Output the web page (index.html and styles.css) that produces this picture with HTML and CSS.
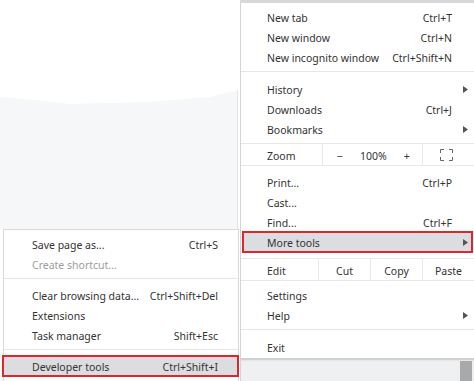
FILE: index.html
```html
<!DOCTYPE html>
<html lang="en">
<head>
  <meta charset="UTF-8">
  <title>Chrome menu - More tools</title>
  <link rel="stylesheet" href="styles.css">
</head>
<body>
  <div class="screen">
    <!-- left side: page behind the menu + submenu -->
    <div class="left">
      <div class="blank"></div>
      <div class="shade"></div>
      <div class="submenu">
        <div class="item"><span class="label">Save page as...</span><span class="key">Ctrl+S</span></div>
        <div class="item disabled"><span class="label">Create shortcut...</span></div>
        <div class="sep"></div>
        <div class="item"><span class="label">Clear browsing data...</span><span class="key">Ctrl+Shift+Del</span></div>
        <div class="item"><span class="label">Extensions</span></div>
        <div class="item"><span class="label">Task manager</span><span class="key">Shift+Esc</span></div>
        <div class="sep"></div>
        <div class="item active dev"><span class="label">Developer tools</span><span class="key">Ctrl+Shift+I</span></div>
      </div>
    </div>

    <!-- right side: main chrome menu -->
    <div class="right">
      <div class="strip"></div>
      <div class="menu">
        <div class="item"><span class="label">New tab</span><span class="key">Ctrl+T</span><span class="more"></span></div>
        <div class="item"><span class="label">New window</span><span class="key">Ctrl+N</span><span class="more"></span></div>
        <div class="item"><span class="label">New incognito window</span><span class="key">Ctrl+Shift+N</span><span class="more"></span></div>
        <div class="sep"></div>
        <div class="item"><span class="label">History</span><span class="more"><svg width="5" height="7" viewBox="0 0 5 7"><path d="M0 0 L5 3.5 L0 7 Z" fill="#555"/></svg></span></div>
        <div class="item"><span class="label">Downloads</span><span class="key">Ctrl+J</span><span class="more"></span></div>
        <div class="item"><span class="label">Bookmarks</span><span class="more"><svg width="5" height="7" viewBox="0 0 5 7"><path d="M0 0 L5 3.5 L0 7 Z" fill="#555"/></svg></span></div>

        <div class="zoom-row">
          <div class="cell zoom-label">Zoom</div>
          <div class="cell zoom-ctrl"><span class="minus">−</span><span class="pct">100%</span><span class="plus">+</span></div>
          <div class="cell zoom-full">
            <svg width="13" height="12" viewBox="0 0 13 12" fill="none" stroke="#666" stroke-width="1">
              <path d="M0.5 4 V0.5 H4"/>
              <path d="M9 0.5 H12.5 V4"/>
              <path d="M0.5 8 V11.5 H4"/>
              <path d="M9 11.5 H12.5 V8"/>
            </svg>
          </div>
        </div>

        <div class="item print"><span class="label">Print...</span><span class="key">Ctrl+P</span><span class="more"></span></div>
        <div class="item"><span class="label">Cast...</span><span class="more"></span></div>
        <div class="item"><span class="label">Find...</span><span class="key">Ctrl+F</span><span class="more"></span></div>
        <div class="item active"><span class="label">More tools</span><span class="more"><svg width="5" height="7" viewBox="0 0 5 7"><path d="M0 0 L5 3.5 L0 7 Z" fill="#555"/></svg></span></div>

        <div class="edit-row">
          <div class="cell">Edit</div>
          <div class="cell">Cut</div>
          <div class="cell">Copy</div>
          <div class="cell">Paste</div>
        </div>

        <div class="item settings"><span class="label">Settings</span><span class="more"></span></div>
        <div class="item"><span class="label">Help</span><span class="more"><svg width="5" height="7" viewBox="0 0 5 7"><path d="M0 0 L5 3.5 L0 7 Z" fill="#555"/></svg></span></div>
        <div class="sep"></div>
        <div class="item"><span class="label">Exit</span><span class="more"></span></div>
      </div>
      <div class="below"><div class="thumb"></div></div>
    </div>
  </div>
</body>
</html>
```

FILE: styles.css
```css
/* base */
body {
  margin: 0;
  background: #fff;
  font-family: "Noto Sans", "Open Sans", sans-serif;
  font-size: 10.5px;
  color: #333;
}

.screen {
  display: flex;
  width: 474px;
  height: 381px;
  overflow: hidden;
}

/* left column */
.left {
  width: 240px;
  flex: none;
  display: flex;
  flex-direction: column;
}
.blank {
  height: 88px;
}
.shade {
  height: 141px;
  width: 237px;
  background: #f6f7f9;
  border-right: 1px solid #e3e4e6;
  clip-path: polygon(0 9px, 35px 12px, 70px 16px, 150px 14px, 210px 9px, 238px 2px, 238px 100%, 0 100%);
}
.submenu {
  margin-left: 3px;
  width: 236px;
  flex: 1;
  background: #fff;
  border-top: 1px solid #d9d9d9;
  border-left: 1px solid #d9d9d9;
  border-right: 1px solid #d9d9d9;
  padding-top: 4px;
  box-sizing: border-box;
}
.submenu .item {
  padding-left: 28px;
  padding-right: 20px;
}

/* right column */
.right {
  width: 234px;
  flex: none;
  display: flex;
  flex-direction: column;
}
.strip {
  height: 3px;
  background: #d7d8da;
}
.menu {
  background: #fff;
  border-left: 1px solid #d4d4d4;
  border-bottom: 1px solid #cfcfcf;
  padding: 4px 0 1px;
}
.menu .item {
  padding-left: 26px;
}
.below {
  flex: 1;
  background: #eef0f2;
  border-left: 1px solid #d4d4d4;
  box-shadow: inset 0 2px 2px -1px #c8c8c8;
  display: flex;
  justify-content: flex-end;
  padding-right: 2px;
}
.thumb {
  width: 12px;
  margin-top: 2px;
  background: #a9a9a9;
}

/* menu rows */
.item {
  display: flex;
  align-items: center;
  height: 20px;
  padding-top: 2px;
  box-sizing: border-box;
  white-space: nowrap;
}
.item .label {
  flex: 1;
}
.item .key {
  text-align: right;
}
.item .more {
  width: 22px;
  flex: none;
  display: flex;
  align-items: center;
  padding-left: 11px;
  margin-top: -2px;
  box-sizing: border-box;
}
.item.disabled {
  color: #9c9c9c;
}

/* highlighted rows with red frame */
.item.active {
  position: relative;
  z-index: 0;
}
.item.active::before {
  content: '';
  position: absolute;
  top: -1px;
  bottom: -1px;
  left: 1px;
  right: 1px;
  background: #dcdde0;
  border: 2px solid #e1252b;
  z-index: -1;
}
.item.dev::before {
  left: -2px;
  right: -1px;
}

.sep {
  height: 1px;
  background: #e6e6e6;
  margin: 4px 0 7px;
}
.submenu .sep {
  margin: 4px 0 6px;
}

/* zoom + edit rows */
.zoom-row,
.edit-row {
  display: flex;
  border-top: 1px solid #e8e8e8;
  border-bottom: 1px solid #e8e8e8;
  height: 21px;
}
.zoom-row {
  margin: 4px 0 6px;
}
.edit-row {
  margin: 6px 0 4px;
}
.cell {
  display: flex;
  align-items: center;
  justify-content: center;
  box-sizing: border-box;
  padding-top: 2px;
  border-left: 1px solid #e8e8e8;
}
.cell:first-child {
  border-left: none;
  justify-content: flex-start;
  padding-left: 26px;
}
.zoom-label {
  width: 81px;
}
.zoom-ctrl {
  width: 100px;
  justify-content: flex-start;
}
.zoom-ctrl .minus {
  margin-left: 14px;
}
.zoom-ctrl .pct {
  margin-left: 17px;
}
.zoom-ctrl .plus {
  margin-left: 17px;
}
.zoom-full {
  flex: 1;
  justify-content: flex-start;
  padding-left: 17px;
  padding-top: 0;
}
.edit-row .cell {
  width: 52px;
}
.edit-row .cell:first-child {
  width: 77px;
}
.edit-row .cell:last-child {
  flex: 1;
}
```
